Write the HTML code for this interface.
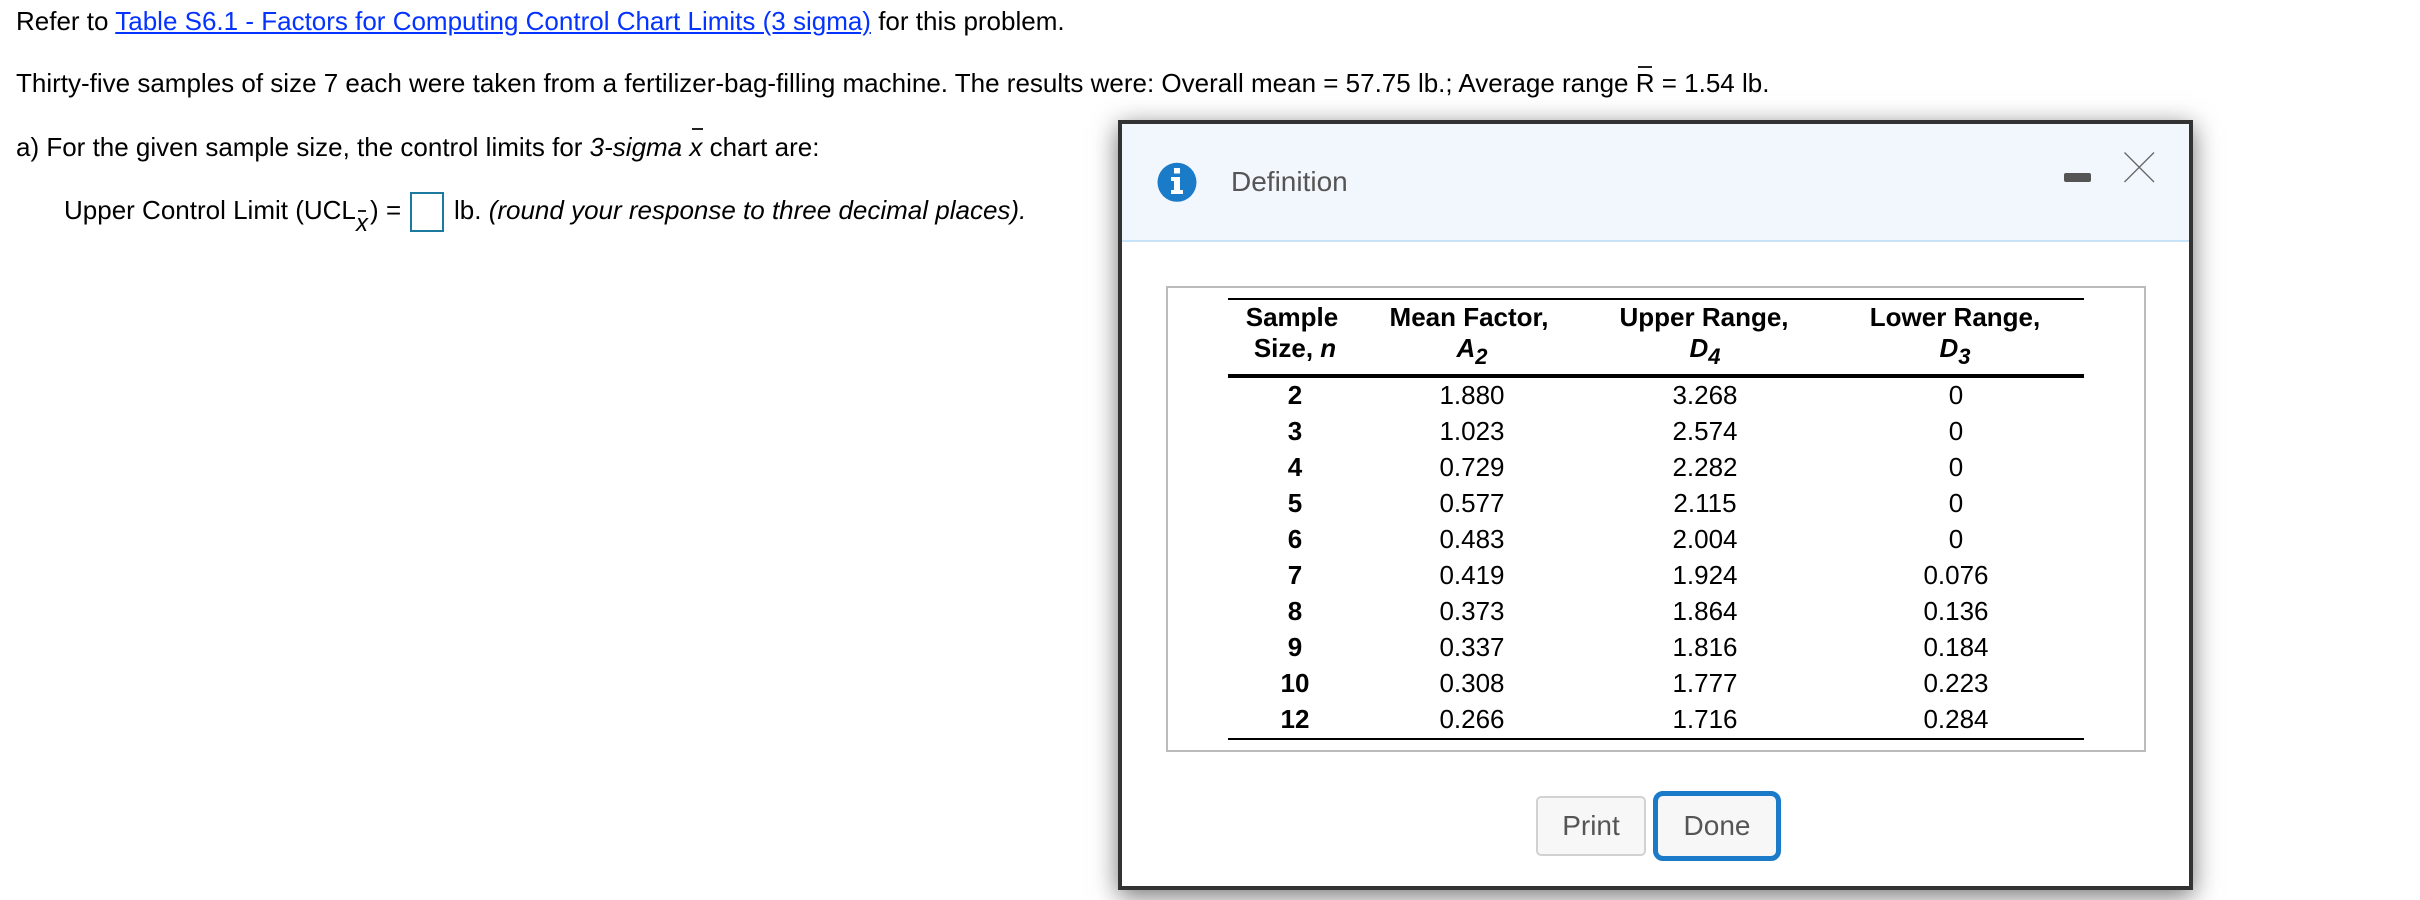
<!DOCTYPE html>
<html><head><meta charset="utf-8"><style>
html,body{margin:0;padding:0;background:#fff;width:2420px;height:900px;overflow:hidden}
body{position:relative;font-family:"Liberation Sans",sans-serif;font-size:26px;color:#000}
.t{position:absolute;white-space:nowrap;line-height:30px}
a{color:#0433ff;text-decoration:underline}
.bar{position:absolute;background:#222;height:2px}
#m{position:absolute;left:1118px;top:120px;width:1075px;height:770px;box-sizing:border-box;border:4px solid #333;background:#fff;box-shadow:0 6px 24px rgba(0,0,0,.55)}
#h{position:absolute;left:1122px;top:124px;width:1067px;height:116px;background:#f2f6fd;border-bottom:2px solid #c8e3f8}
#box{position:absolute;left:1166px;top:286px;width:980px;height:466px;box-sizing:border-box;border:2px solid #bbb}
.l{position:absolute;left:1228px;width:856px;background:#000}
.c{position:absolute;width:300px;text-align:center;white-space:nowrap;line-height:30px}
.b{font-weight:bold}
sub{font-size:22px;line-height:0;vertical-align:-7px}
.btn{position:absolute;box-sizing:border-box;background:#f7f7f7;text-align:center;color:#555;font-size:28px}
</style></head><body>
<div class="t" style="left:16px;top:6px">Refer to <a>Table S6.1 - Factors for Computing Control Chart Limits (3 sigma)</a> for this problem.</div>
<div class="t" style="left:16px;top:68px">Thirty-five samples of size 7 each were taken from a fertilizer-bag-filling machine. The results were: Overall mean = 57.75 lb.; Average range R = 1.54 lb.</div>
<div class="bar" style="left:1638px;top:66px;width:14px"></div>
<div class="t" style="left:16px;top:132px">a) For the given sample size, the control limits for <i>3-sigma x</i> chart are:</div>
<div class="bar" style="left:692px;top:128px;width:11px"></div>
<div class="t" style="left:64px;top:195px">Upper Control Limit (UCL</div>
<div class="t" style="left:356px;top:209px;font-size:24px;font-style:italic">x</div>
<div class="bar" style="left:358px;top:210px;width:8px"></div>
<div class="t" style="left:370px;top:195px">)</div>
<div class="t" style="left:386px;top:195px">=</div>
<div style="position:absolute;left:410px;top:192px;width:34px;height:40px;box-sizing:border-box;border:2px solid #1b7a9e"></div>
<div class="t" style="left:454px;top:195px">lb. <i>(round your response to three decimal places).</i></div>

<div id="m"></div>
<div id="h"></div>
<svg style="position:absolute;left:1150px;top:150px" width="60" height="60" viewBox="0 0 60 60">
<circle cx="27" cy="32.3" r="19.5" fill="#1a7cc9"/>
<path d="M24 18h6v5.500h-6zM21 27h9v13h3v4H21v-4h3v-9h-3z" fill="#fff"/>
</svg>
<div class="t" style="left:1231px;top:167px;font-size:28px;color:#555">Definition</div>
<div style="position:absolute;left:2064px;top:173px;width:27px;height:9px;background:#555;border-radius:2px"></div>
<svg style="position:absolute;left:2120px;top:148px" width="40" height="40"><path d="M4.500 4.500L34 34M34 4.500L4.500 34" stroke="#666" stroke-width="1.300" fill="none"/></svg>

<div id="box"></div>
<div class="l" style="top:298px;height:2px"></div>
<div class="l" style="top:374px;height:4px"></div>
<div class="l" style="top:738px;height:2px"></div>

<div class="c b" style="left:1142px;top:302px">Sample</div>
<div class="c b" style="left:1145px;top:333px">Size, <i>n</i></div>
<div class="c b" style="left:1319px;top:302px">Mean Factor,</div>
<div class="c b" style="left:1322px;top:333px"><i>A<sub>2</sub></i></div>
<div class="c b" style="left:1554px;top:302px">Upper Range,</div>
<div class="c b" style="left:1555px;top:333px"><i>D<sub>4</sub></i></div>
<div class="c b" style="left:1805px;top:302px">Lower Range,</div>
<div class="c b" style="left:1805px;top:333px"><i>D<sub>3</sub></i></div>

<div class="c b" style="left:1145px;top:380px">2</div><div class="c" style="left:1322px;top:380px">1.880</div><div class="c" style="left:1555px;top:380px">3.268</div><div class="c" style="left:1806px;top:380px">0</div>
<div class="c b" style="left:1145px;top:416px">3</div><div class="c" style="left:1322px;top:416px">1.023</div><div class="c" style="left:1555px;top:416px">2.574</div><div class="c" style="left:1806px;top:416px">0</div>
<div class="c b" style="left:1145px;top:452px">4</div><div class="c" style="left:1322px;top:452px">0.729</div><div class="c" style="left:1555px;top:452px">2.282</div><div class="c" style="left:1806px;top:452px">0</div>
<div class="c b" style="left:1145px;top:488px">5</div><div class="c" style="left:1322px;top:488px">0.577</div><div class="c" style="left:1555px;top:488px">2.115</div><div class="c" style="left:1806px;top:488px">0</div>
<div class="c b" style="left:1145px;top:524px">6</div><div class="c" style="left:1322px;top:524px">0.483</div><div class="c" style="left:1555px;top:524px">2.004</div><div class="c" style="left:1806px;top:524px">0</div>
<div class="c b" style="left:1145px;top:560px">7</div><div class="c" style="left:1322px;top:560px">0.419</div><div class="c" style="left:1555px;top:560px">1.924</div><div class="c" style="left:1806px;top:560px">0.076</div>
<div class="c b" style="left:1145px;top:596px">8</div><div class="c" style="left:1322px;top:596px">0.373</div><div class="c" style="left:1555px;top:596px">1.864</div><div class="c" style="left:1806px;top:596px">0.136</div>
<div class="c b" style="left:1145px;top:632px">9</div><div class="c" style="left:1322px;top:632px">0.337</div><div class="c" style="left:1555px;top:632px">1.816</div><div class="c" style="left:1806px;top:632px">0.184</div>
<div class="c b" style="left:1145px;top:668px">10</div><div class="c" style="left:1322px;top:668px">0.308</div><div class="c" style="left:1555px;top:668px">1.777</div><div class="c" style="left:1806px;top:668px">0.223</div>
<div class="c b" style="left:1145px;top:704px">12</div><div class="c" style="left:1322px;top:704px">0.266</div><div class="c" style="left:1555px;top:704px">1.716</div><div class="c" style="left:1806px;top:704px">0.284</div>

<div class="btn" style="left:1536px;top:796px;width:110px;height:60px;border:2px solid #d2d2d2;border-radius:5px;line-height:56px">Print</div>
<div class="btn" style="left:1653px;top:791px;width:128px;height:70px;border:5px solid #1b7bc8;border-radius:10px;line-height:60px">Done</div>
</body></html>
